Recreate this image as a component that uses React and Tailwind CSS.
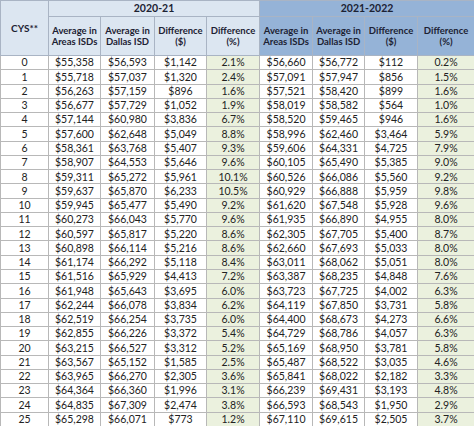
import React from "react";

const rows = [
  ["0", "$55,358", "$56,593", "$1,142", "2.1%", "$56,660", "$56,772", "$112", "0.2%"],
  ["1", "$55,718", "$57,037", "$1,320", "2.4%", "$57,091", "$57,947", "$856", "1.5%"],
  ["2", "$56,263", "$57,159", "$896", "1.6%", "$57,521", "$58,420", "$899", "1.6%"],
  ["3", "$56,677", "$57,729", "$1,052", "1.9%", "$58,019", "$58,582", "$564", "1.0%"],
  ["4", "$57,144", "$60,980", "$3,836", "6.7%", "$58,520", "$59,465", "$946", "1.6%"],
  ["5", "$57,600", "$62,648", "$5,049", "8.8%", "$58,996", "$62,460", "$3,464", "5.9%"],
  ["6", "$58,361", "$63,768", "$5,407", "9.3%", "$59,606", "$64,331", "$4,725", "7.9%"],
  ["7", "$58,907", "$64,553", "$5,646", "9.6%", "$60,105", "$65,490", "$5,385", "9.0%"],
  ["8", "$59,311", "$65,272", "$5,961", "10.1%", "$60,526", "$66,086", "$5,560", "9.2%"],
  ["9", "$59,637", "$65,870", "$6,233", "10.5%", "$60,929", "$66,888", "$5,959", "9.8%"],
  ["10", "$59,945", "$65,477", "$5,490", "9.2%", "$61,620", "$67,548", "$5,928", "9.6%"],
  ["11", "$60,273", "$66,043", "$5,770", "9.6%", "$61,935", "$66,890", "$4,955", "8.0%"],
  ["12", "$60,597", "$65,817", "$5,220", "8.6%", "$62,305", "$67,705", "$5,400", "8.7%"],
  ["13", "$60,898", "$66,114", "$5,216", "8.6%", "$62,660", "$67,693", "$5,033", "8.0%"],
  ["14", "$61,174", "$66,292", "$5,118", "8.4%", "$63,011", "$68,062", "$5,051", "8.0%"],
  ["15", "$61,516", "$65,929", "$4,413", "7.2%", "$63,387", "$68,235", "$4,848", "7.6%"],
  ["16", "$61,948", "$65,643", "$3,695", "6.0%", "$63,723", "$67,725", "$4,002", "6.3%"],
  ["17", "$62,244", "$66,078", "$3,834", "6.2%", "$64,119", "$67,850", "$3,731", "5.8%"],
  ["18", "$62,519", "$66,254", "$3,735", "6.0%", "$64,400", "$68,673", "$4,273", "6.6%"],
  ["19", "$62,855", "$66,226", "$3,372", "5.4%", "$64,729", "$68,786", "$4,057", "6.3%"],
  ["20", "$63,215", "$66,527", "$3,312", "5.2%", "$65,169", "$68,950", "$3,781", "5.8%"],
  ["21", "$63,567", "$65,152", "$1,585", "2.5%", "$65,487", "$68,522", "$3,035", "4.6%"],
  ["22", "$63,965", "$66,270", "$2,305", "3.6%", "$65,841", "$68,022", "$2,182", "3.3%"],
  ["23", "$64,364", "$66,360", "$1,996", "3.1%", "$66,239", "$69,431", "$3,193", "4.8%"],
  ["24", "$64,835", "$67,309", "$2,474", "3.8%", "$66,593", "$68,543", "$1,950", "2.9%"],
  ["25", "$65,298", "$66,071", "$773", "1.2%", "$67,110", "$69,615", "$2,505", "3.7%"],
];

const widths = [48, 52, 54, 52, 53, 53, 52, 53, 57];

const SubHead = ({ top, bottom, dark }) => (
  <th
    className={`border border-[#a9b4c4] p-0 align-middle text-center font-bold text-[9.5px] leading-[11px] text-[#1c2233] ${
      dark ? "bg-[#95b3d7]" : "bg-[#dce6f1]"
    }`}
  >
    <div>{top}</div>
    <div>{bottom}</div>
  </th>
);

export default function App() {
  return (
    <div className="w-[474px] h-[426px] overflow-hidden bg-white font-['Lato',sans-serif]">
      <table className="table-fixed border-collapse w-[474px]">
        <colgroup>
          {widths.map((w, i) => (
            <col key={i} style={{ width: w }} />
          ))}
        </colgroup>
        <thead>
          <tr className="h-[16px]">
            <th
              rowSpan={2}
              className="border border-[#a9b4c4] bg-[#dce6f1] p-0 text-center font-bold text-[10px] text-[#1c2233]"
            >
              CYS**
            </th>
            <th
              colSpan={4}
              className="border border-[#a9b4c4] bg-[#dce6f1] p-0 text-center font-bold text-[10.5px] leading-none text-[#1c2233]"
            >
              2020-21
            </th>
            <th
              colSpan={4}
              className="border border-[#a9b4c4] bg-[#95b3d7] p-0 text-center font-bold text-[10.5px] leading-none text-[#1c2233]"
            >
              2021-2022
            </th>
          </tr>
          <tr className="h-[39px]">
            <SubHead top="Average in" bottom="Areas ISDs" />
            <SubHead top="Average in" bottom="Dallas ISD" />
            <SubHead top="Difference" bottom="($)" />
            <SubHead top="Difference" bottom="(%)" />
            <SubHead top="Average in" bottom="Areas ISDs" dark />
            <SubHead top="Average in" bottom="Dallas ISD" dark />
            <SubHead top="Difference" bottom="($)" dark />
            <SubHead top="Difference" bottom="(%)" dark />
          </tr>
        </thead>
        <tbody>
          {rows.map((r) => (
            <tr key={r[0]} className="h-[14.27px]">
              {r.map((v, i) => (
                <td
                  key={i}
                  className={`border border-[#b8b8b8] p-0 text-center text-[10.5px] leading-none text-[#222222] ${
                    i === 4 || i === 8 ? "bg-[#ebf1de]" : "bg-white"
                  }`}
                >
                  {v}
                </td>
              ))}
            </tr>
          ))}
        </tbody>
      </table>
    </div>
  );
}
